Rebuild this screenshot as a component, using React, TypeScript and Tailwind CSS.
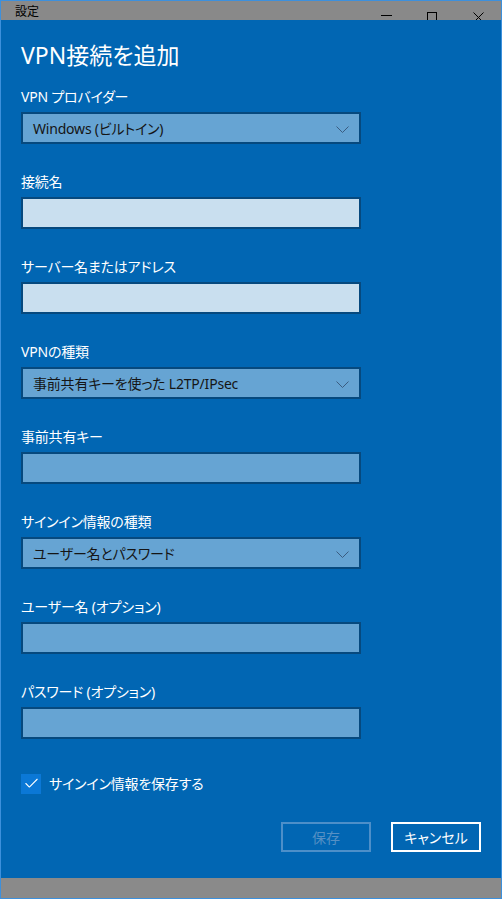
import { Check } from "lucide-react";

const font = { fontFamily: '"Noto Sans", "Noto Sans CJK JP", sans-serif' };

function Chevron() {
    return (
        <svg className="absolute right-[10px] top-[12px]" width="13" height="8" viewBox="0 0 13 8" fill="none">
            <path d="M0.5 0.5L6.5 6.5L12.5 0.5" stroke="#3a5c80" strokeWidth="1" />
        </svg>
    );
}

function Field({ label, children }: { label: string; children: React.ReactNode }) {
    return (
        <div className="mt-[28px] first:mt-[17px]">
            <div className="h-[20px] leading-[20px] text-[14px] text-white tracking-[-0.2px]">{label}</div>
            <div className="mt-[5px]">{children}</div>
        </div>
    );
}

function Select({ value }: { value: string }) {
    return (
        <div className="relative w-[340px] h-[32px] bg-[#66a4d3] border-2 border-[#06497e] flex items-center pl-[10px] text-[14px] text-[#151515] tracking-[-0.2px]">
            {value}
            <Chevron />
        </div>
    );
}

function TextBox({ light }: { light?: boolean }) {
    return (
        <div
            className={`w-[340px] h-[32px] border-2 border-[#06497e] ${light ? "bg-[#c9dfef]" : "bg-[#66a4d3]"}`}
        />
    );
}

export default function App() {
    return (
        <div
            className="w-[502px] h-[899px] border border-[#3d90dc] flex flex-col [font-feature-settings:'palt']"
            style={font}
        >
            {/* caption bar */}
            <div className="h-[19px] bg-[#898989] overflow-hidden flex">
                <div className="flex-1 pl-[14px] pt-[3px] text-[12px] leading-[15px] text-black">設定</div>
                <div className="w-[46px] flex justify-center pt-[14px]">
                    <div className="w-[11px] h-px bg-black" />
                </div>
                <div className="w-[46px] flex justify-center pt-[11px]">
                    <div className="w-[10px] h-[10px] border border-black" />
                </div>
                <div className="w-[46px] flex justify-center pt-[11px]">
                    <svg width="11" height="11" viewBox="0 0 11 11">
                        <path d="M0.5 0.5L10.5 10.5M10.5 0.5L0.5 10.5" stroke="#000" strokeWidth="1" />
                    </svg>
                </div>
            </div>

            <div className="flex-1 bg-[#0166b3] px-[20px] pt-[20px] flex flex-col">
                <h1 className="text-[23px] leading-[30px] text-white font-normal">VPN接続を追加</h1>

                <div className="flex flex-col">
                    <Field label="VPN プロバイダー">
                        <Select value="Windows (ビルトイン)" />
                    </Field>
                    <Field label="接続名">
                        <TextBox light />
                    </Field>
                    <Field label="サーバー名またはアドレス">
                        <TextBox light />
                    </Field>
                    <Field label="VPNの種類">
                        <Select value="事前共有キーを使った L2TP/IPsec" />
                    </Field>
                    <Field label="事前共有キー">
                        <TextBox />
                    </Field>
                    <Field label="サインイン情報の種類">
                        <Select value="ユーザー名とパスワード" />
                    </Field>
                    <Field label="ユーザー名 (オプション)">
                        <TextBox />
                    </Field>
                    <Field label="パスワード (オプション)">
                        <TextBox />
                    </Field>
                </div>

                <div className="mt-[34px] flex items-center gap-[8px]">
                    <div className="w-[20px] h-[20px] bg-[#0b78d6] flex items-center justify-center">
                        <Check className="w-[17px] h-[17px] text-white" strokeWidth={1.5} />
                    </div>
                    <span className="text-[14px] text-white tracking-[-0.2px]">サインイン情報を保存する</span>
                </div>

                <div className="mt-[28px] flex justify-end gap-[20px]">
                    <button className="w-[90px] h-[30px] border-2 border-[#4d8fc9] text-[14px] text-[#5690c4]">
                        保存
                    </button>
                    <button className="w-[90px] h-[30px] border-2 border-white text-[14px] text-white">
                        キャンセル
                    </button>
                </div>
            </div>

            <div className="h-[20px] bg-[#8a8a8a]" />
        </div>
    );
}
